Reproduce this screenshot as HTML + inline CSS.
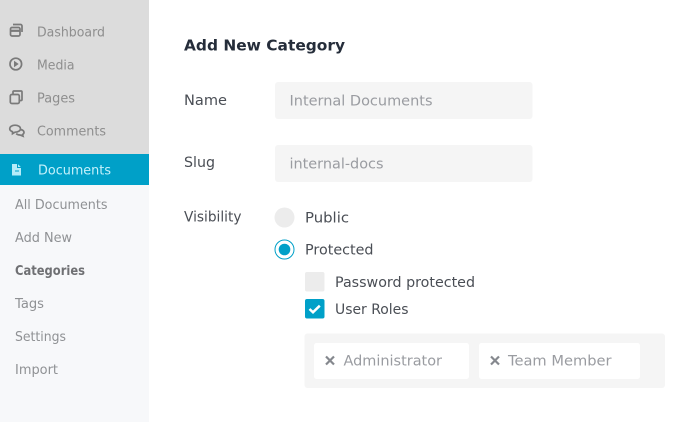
<!DOCTYPE html>
<html><head><meta charset="utf-8"><style>
html,body{margin:0;padding:0;background:#fff;width:700px;height:422px;overflow:hidden}
svg{display:block;filter:blur(.25px)}
text{font-family:"DejaVu Sans",sans-serif;font-size:13.5px}
.s{fill:#8e8e8e}
.l{fill:#8f9194}
.f{fill:#9a9ca1;font-size:14.5px}
.d{fill:#4a4e55;font-size:14.5px}
</style></head><body>
<svg width="700" height="422" viewBox="0 0 700 422" xmlns="http://www.w3.org/2000/svg">
<rect width="149" height="422" fill="#f7f8fa"/>
<rect width="149" height="154" fill="#dcdcdc"/>
<rect y="154" width="149" height="31" fill="#00a0c8"/>

<g fill="none" stroke="#7a7a7a" stroke-width="1.7">
<rect x="10.500" y="27.500" width="9.500" height="8.500" rx="1.500"/><path d="M10.500 30.800h9.500" stroke-width="2.200"/><path d="M13 24.500h7.500a1.500 1.500 0 0 1 1.500 1.500v6"/>
<circle cx="15.800" cy="64" r="5.800"/>
<rect x="10.300" y="94.500" width="9" height="9" rx="1.500"/><path d="M13 94v-2a1 1 0 0 1 1-1h7a1 1 0 0 1 1 1v7.500a1 1 0 0 1-1 1h-1.500"/>
<path d="M15 125.200c3 0 5.500 1.500 5.500 3.500s-2.500 3.500-5.500 3.500l-2.500 1.500v-2c-1.700-.7-2.800-1.800-2.800-3 0-2 2.500-3.500 5.300-3.500z"/><path d="M20.500 129.500c2 .4 3.500 1.500 3.500 2.900 0 .9-.6 1.700-1.500 2.200l.5 1.600-3-1.200c-1.500 0-3-.5-3.800-1.400"/>
</g>
<path d="M14 60.800l4.700 3.200-4.700 3.200z" fill="#7a7a7a"/>
<path d="M12 164h5.800l3.200 3.200V175.500h-9z" fill="#b5ecf9"/><path d="M17.500 164v3.500h3.500M15 171h4" fill="none" stroke="#00a0c8" stroke-width="1"/>

<text class="s" x="37" y="36.700" textLength="68" lengthAdjust="spacingAndGlyphs">Dashboard</text>
<text class="s" x="37" y="69.700" textLength="37.500" lengthAdjust="spacingAndGlyphs">Media</text>
<text class="s" x="37" y="102.700" textLength="38" lengthAdjust="spacingAndGlyphs">Pages</text>
<text class="s" x="37" y="135.700" textLength="69" lengthAdjust="spacingAndGlyphs">Comments</text>
<text x="38" y="174.700" fill="#c4f1fb" textLength="73" lengthAdjust="spacingAndGlyphs">Documents</text>

<text class="l" x="15" y="209" textLength="92.500" lengthAdjust="spacingAndGlyphs">All Documents</text>
<text class="l" x="15" y="242" textLength="57" lengthAdjust="spacingAndGlyphs">Add New</text>
<text x="15" y="275" fill="#6f7073" style="font-weight:700" textLength="70" lengthAdjust="spacingAndGlyphs">Categories</text>
<text class="l" x="15" y="308" textLength="29" lengthAdjust="spacingAndGlyphs">Tags</text>
<text class="l" x="15" y="341" textLength="51" lengthAdjust="spacingAndGlyphs">Settings</text>
<text class="l" x="15" y="374" textLength="43" lengthAdjust="spacingAndGlyphs">Import</text>

<text x="184" y="50.500" fill="#252d3a" style="font-size:15.500px;font-weight:700" textLength="161" lengthAdjust="spacingAndGlyphs">Add New Category</text>

<text class="d" x="184" y="105" textLength="43" lengthAdjust="spacingAndGlyphs">Name</text>
<rect x="275" y="82" width="257.500" height="37" rx="3" fill="#f5f5f5"/>
<text class="f" x="289.500" y="105.500" textLength="143" lengthAdjust="spacingAndGlyphs">Internal Documents</text>

<text class="d" x="184" y="167" textLength="31" lengthAdjust="spacingAndGlyphs">Slug</text>
<rect x="275" y="145" width="257.500" height="37" rx="3" fill="#f5f5f5"/>
<text class="f" x="289.500" y="168.500" textLength="94" lengthAdjust="spacingAndGlyphs">internal-docs</text>

<text class="d" x="184" y="221.500" textLength="57.500" lengthAdjust="spacingAndGlyphs">Visibility</text>

<circle cx="284.500" cy="217.500" r="10" fill="#ececec"/>
<text class="d" x="305" y="222.500" textLength="44" lengthAdjust="spacingAndGlyphs">Public</text>

<circle cx="284.500" cy="249.500" r="9.500" fill="#fff" stroke="#00a0c8" stroke-width="1"/>
<circle cx="284.500" cy="249.500" r="5.800" fill="#00a0c8"/>
<text class="d" x="305" y="254.500" textLength="68.500" lengthAdjust="spacingAndGlyphs">Protected</text>

<rect x="305" y="272" width="19.500" height="19.500" rx="2" fill="#ececec"/>
<text class="d" x="335" y="287" textLength="140" lengthAdjust="spacingAndGlyphs">Password protected</text>

<rect x="305" y="299" width="19.500" height="19.500" rx="2" fill="#00a0c8"/>
<path d="M309.500 309l3.500 3.300 6.800-6.600" fill="none" stroke="#fff" stroke-width="2.500"/>
<text class="d" x="335" y="314" textLength="73.500" lengthAdjust="spacingAndGlyphs">User Roles</text>

<rect x="304.500" y="333.500" width="360.500" height="54.500" rx="3" fill="#f5f5f5"/>
<rect x="314" y="343" width="155" height="36" rx="2.500" fill="#fff"/>
<rect x="479" y="343" width="161" height="36" rx="2.500" fill="#fff"/>
<path d="M326 356.500l8 8M334 356.500l-8 8M491 356.500l8 8M499 356.500l-8 8" fill="none" stroke="#85888e" stroke-width="2.200"/>
<text class="f" x="343.500" y="365.500" textLength="98.500" lengthAdjust="spacingAndGlyphs">Administrator</text>
<text class="f" x="508" y="365.500" textLength="103.500" lengthAdjust="spacingAndGlyphs">Team Member</text>
</svg>
</body></html>
